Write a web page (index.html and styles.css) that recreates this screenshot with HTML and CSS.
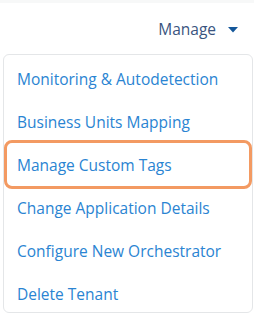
FILE: index.html
```html
<!DOCTYPE html>
<html>
<head>
<meta charset="utf-8">
<link rel="stylesheet" href="styles.css">
</head>
<body>
<div class="topstrip"></div>
<div class="page">
  <div class="toggle-row">
    <span class="toggle">Manage</span>
    <svg class="caret" width="10" height="6" viewBox="0 0 10 6"><path d="M0 0H10L5 5.5Z" fill="#14579a"/></svg>
  </div>
  <div class="menu">
    <div class="item">Monitoring &amp; Autodetection</div>
    <div class="item">Business Units Mapping</div>
    <div class="item focused">Manage Custom Tags</div>
    <div class="item">Change Application Details</div>
    <div class="item">Configure New Orchestrator</div>
    <div class="item last">Delete Tenant</div>
  </div>
</div>
</body>
</html>
```
FILE: styles.css
```css
html, body {
  margin: 0;
  padding: 0;
  background: #ffffff;
  font-family: "Open Sans", "Noto Sans", sans-serif;
}
.topstrip {
  height: 3px;
  background: #f7f8f8;
}
.page {
  padding: 0 1px 0 3px;
}
.toggle-row {
  display: flex;
  justify-content: flex-end;
  align-items: center;
  gap: 12px;
  padding: 9px 15px 8px 0;
  box-sizing: border-box;
  height: 51px;
}
.toggle {
  font-size: 15.5px;
  color: #3a5580;
}
.caret {
  margin-top: 1px;
}
.menu {
  border: 1px solid #e4e6e8;
  border-radius: 6px;
  padding: 2px 0 0 0;
  display: flex;
  flex-direction: column;
}
.item {
  height: 43px;
  flex-shrink: 0;
  display: flex;
  align-items: center;
  padding-left: 13px;
  font-size: 15.5px;
  color: #2a84d2;
  box-sizing: border-box;
}
.item.focused {
  border: 3px solid #f39a62;
  border-radius: 8px;
  margin: -3px 0;
  height: 49px;
  padding-left: 10px;
}
.item.last {
  margin-bottom: -3px;
}
```
